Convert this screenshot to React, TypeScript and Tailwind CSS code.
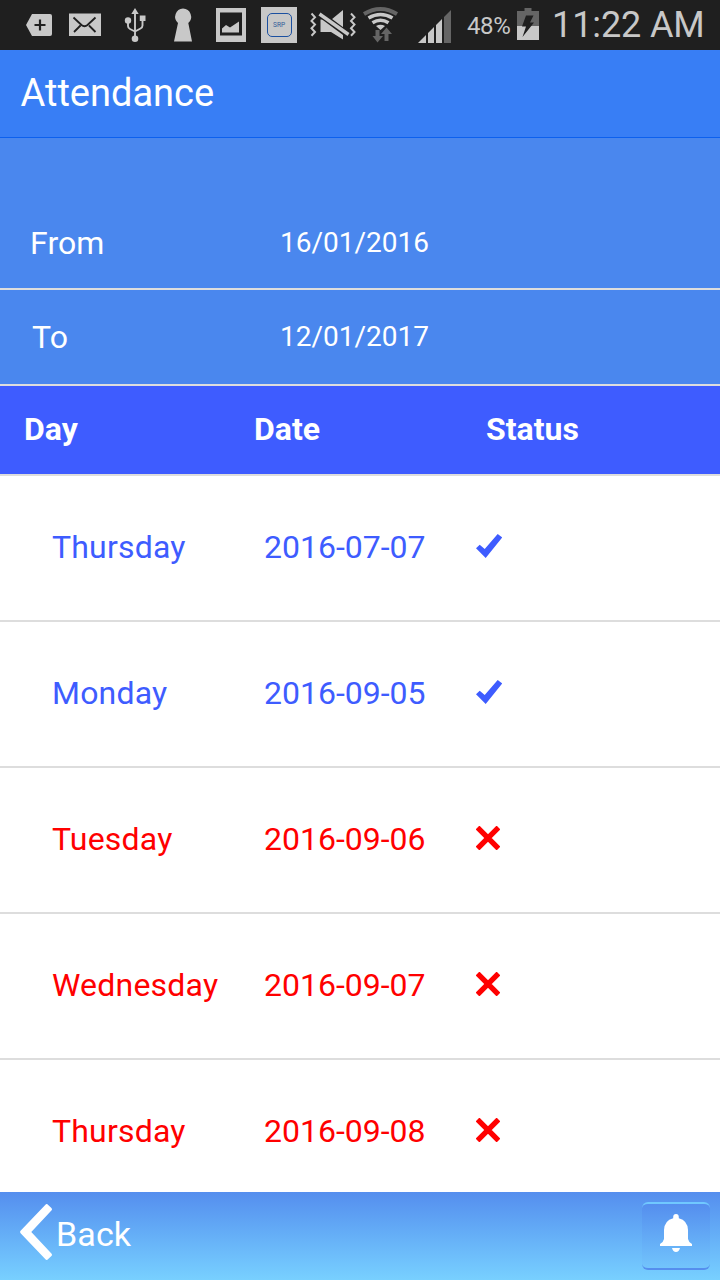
type Entry = { day: string; date: string; present: boolean };

const entries: Entry[] = [
  { day: "Thursday", date: "2016-07-07", present: true },
  { day: "Monday", date: "2016-09-05", present: true },
  { day: "Tuesday", date: "2016-09-06", present: false },
  { day: "Wednesday", date: "2016-09-07", present: false },
  { day: "Thursday", date: "2016-09-08", present: false },
];

function StatusBar() {
  return (
    <div className="flex h-[50px] shrink-0 items-center bg-[#1f1f1f] pl-[26px] text-[#c8c8c8]">
      {/* Tag with plus */}
      <svg className="h-[50px] w-[26px] shrink-0" viewBox="26 0 26 50" fill="#c8c8c8">
        <path d="M32 14h18q2 0 2 2v18q0 2-2 2H32l-6-11z" />
        <path d="M34.5 25h11M40 19.5v11" stroke="#1f1f1f" strokeWidth="2.2" />
      </svg>

      {/* Mail */}
      <svg className="ml-[17px] h-[50px] w-8 shrink-0" viewBox="69 0 32 50">
        <path d="M69 13.5h32V36H69z" fill="#c8c8c8" />
        <path d="M73.5 17.5l8 7.5q3 2.5 6 0l8-7.5M74 32l6.5-6.5M95.5 32L89 25.5" fill="none" stroke="#1f1f1f" strokeWidth="1.8" />
      </svg>

      {/* USB */}
      <svg className="ml-[23px] h-[50px] w-[22px] shrink-0" viewBox="124 0 22 50" fill="#c8c8c8">
        <path d="M135 8l3.7 6h-7.4zM139.8 15.5h5.7v5.5h-5.7z" />
        <circle cx="128" cy="20.5" r="3.2" />
        <circle cx="135" cy="38.8" r="3.3" />
        <path d="M135 12v25M128 21v5q0 2 2 3l5 2.5 5.5-3q2-1 2-3V20" fill="none" stroke="#c8c8c8" strokeWidth="1.9" />
      </svg>

      {/* Keyhole */}
      <svg className="ml-[27px] h-[50px] w-5 shrink-0" viewBox="173 0 20 50" fill="#c8c8c8">
        <path d="M183 8.5a8.3 8.3 0 0 1 5.3 14.5L192 41.5h-18L178 23A8.3 8.3 0 0 1 183 8.5z" />
      </svg>

      {/* Picture */}
      <svg className="ml-[23px] h-[50px] w-[30px] shrink-0" viewBox="216 0 30 50">
        <path d="M216 8h30v34h-30z" fill="#c8c8c8" />
        <path d="M220 12.5h22v23h-22z" fill="#1f1f1f" />
        <path d="M222 32.5v-4l4-3.5 4 2.5 9-6v11z" fill="#c8c8c8" />
      </svg>

      {/* SRP app */}
      <div className="ml-[15px] flex h-9 w-9 shrink-0 items-center justify-center bg-[#c8c8c8]">
        <div className="flex h-6 w-[25px] items-center justify-center rounded-[5px] border border-[#1c50a0] text-[6.5px] font-normal leading-none text-[#305c98]">
          SRP
        </div>
      </div>

      {/* Vibrate, muted */}
      <svg className="ml-3 h-[50px] w-[48px] shrink-0" viewBox="309 0 48 50">
        <path d="M320.5 19.5h11L343 10v29.5L331 32h-10.5z" fill="#c8c8c8" />
        <path d="M318 12.5l31 23" stroke="#1f1f1f" strokeWidth="6.5" />
        <path d="M319.5 14l29 20.5" stroke="#c8c8c8" strokeWidth="3.4" />
        <path
          d="M311.5 13.5l3.5 3.7-3.5 3.7 3.5 3.7-3.5 3.7 3.5 3.7-3.5 3.7M351 13.5l3.5 3.7-3.5 3.7 3.5 3.7-3.5 3.7 3.5 3.7-3.5 3.7"
          fill="none"
          stroke="#c8c8c8"
          strokeWidth="2"
        />
      </svg>

      {/* Wifi */}
      <svg className="ml-[5px] h-[50px] w-9 shrink-0" viewBox="362 0 36 50" fill="none" strokeWidth="3.6">
        <path d="M364 14q16.5-10 33 0" stroke="#656565" strokeWidth="4" />
        <path d="M368.5 18q12-7 24 0M372.5 22.8q8-5 16 0" stroke="#c8c8c8" />
        <path d="M376 26q4.500-2.500 9 0L380.500 30z" fill="#c8c8c8" />
        <path d="M375.5 30h4v6h3.5l-5.500 6.500-5-6.500h3zM386.500 27.500l5.500 6.500h-3.500v7h-4v-7H381z" fill="#656565" />
      </svg>

      {/* Signal */}
      <svg className="ml-5 h-[50px] w-[34px] shrink-0" viewBox="418 0 34 50" fill="#c8c8c8">
        <path d="M418 43l8-8v8zM428 33l6-6v16h-6zM436 25l6-6v24h-6z" />
        <path d="M444 17l7-7v33h-7z" fill="#656565" />
      </svg>

      <span className="ml-[15px] w-[47px] pt-[2px] text-2xl leading-7 tracking-[-0.4px]">48%</span>

      {/* Battery */}
      <svg className="ml-[3px] h-[50px] w-[22px] shrink-0" viewBox="517 0 22 50">
        <path d="M517 11h7.5V8h7v3h7.5v15h-22z" fill="#656565" />
        <path d="M517 26h22v14h-22z" fill="#c8c8c8" />
        <path d="M526 15.5h7.5L530 22.5h4L522.5 37l3.5-10.5h-4z" fill="#1f1f1f" />
      </svg>

      <span className="ml-[13px] whitespace-nowrap text-4xl leading-[42px] tracking-[-0.1px]">11:22 AM</span>
    </div>
  );
}

function CheckMark() {
  return (
    <svg className="mb-[2px] h-6 w-[26px]" viewBox="0 0 26 24" fill="#3e5cff">
      <path d="M0 14.3l3.7-3.6 5 4.3L21.700 0l4.500 3.400L9.700 24z" />
    </svg>
  );
}

function CrossMark() {
  return (
    <svg className="mb-[2px] h-6 w-6" viewBox="0 0 24 24" fill="none" stroke="#ff0000" strokeWidth="5.4">
      <path d="M1.5 1.5l21 21M22.5 1.5l-21 21" />
    </svg>
  );
}

function FilterRow({ label, value, className }: { label: string; value: string; className: string }) {
  return (
    <div className={`grid shrink-0 items-center border-b-2 border-[#dddddd] bg-[#4a87ee] text-white ${className}`}>
      <span className="text-[32px] leading-10 tracking-[0.1px]">{label}</span>
      <span className="text-[28px] leading-10">{value}</span>
    </div>
  );
}

export default function App() {
  return (
    <div className="flex h-[1280px] w-[720px] flex-col overflow-hidden bg-white font-['Roboto',sans-serif]">
      <StatusBar />

      <header className="flex h-[88px] shrink-0 items-center border-b border-[#0c60ee] bg-[#387ef5] pl-[20.5px] text-[38px] text-white">
        Attendance
      </header>

      <main className="flex min-h-0 flex-1 flex-col overflow-hidden">
        <FilterRow label="From" value="16/01/2016" className="h-[152px] grid-cols-[250px_1fr] pl-[30px] pt-[60px]" />
        <FilterRow label="To" value="12/01/2017" className="h-24 grid-cols-[248px_1fr] pl-8" />

        <div className="flex h-[90px] shrink-0 items-center border-b-2 border-[#dddddd] bg-[#3e5cff] pb-[2px] pl-6 text-[32px] font-bold text-white">
          <span className="w-[230px]">Day</span>
          <span className="w-[232px]">Date</span>
          <span>Status</span>
        </div>

        {entries.map((entry) => (
          <div
            key={entry.date}
            className={`flex h-[146px] shrink-0 items-center border-b-2 border-[#dddddd] pb-[2px] pl-[52px] text-[32px] ${
              entry.present ? "text-[#3e5cff]" : "text-[#ff0000]"
            }`}
          >
            <span className="w-[212px] tracking-[0.2px]">{entry.day}</span>
            <span className="w-[212px]">{entry.date}</span>
            {entry.present ? <CheckMark /> : <CrossMark />}
          </div>
        ))}
      </main>

      <footer className="flex h-[88px] shrink-0 items-center bg-linear-to-b from-[#558eee] to-[#78d0ff] pl-5 pr-[10px] text-white">
        <svg className="mb-2 h-14 w-8" viewBox="0 0 32 56" fill="currentColor">
          <path d="M25.2 1q1.500-2 3 0l3.200 3q1.200 1.300 0 2.600L11.300 28l20.100 21.400q1.200 1.300 0 2.600l-3.200 3q-1.500 2-3 0L.600 29.200q-1-1.200 0-2.400z" />
        </svg>
        <span className="ml-1 flex-1 pb-1 text-[34px] leading-10 tracking-[0.1px]">Back</span>
        <button className="flex h-[68px] w-[68px] items-center justify-center rounded-md border-y-2 border-t-[#70c8ff] border-b-[#558eee] bg-linear-to-b from-[#558eee] to-[#72c4fc]">
          <svg className="mb-[6px] h-[38px] w-8" viewBox="0 0 32 38" fill="currentColor">
            <path d="M13.200 3a2.800 3 0 0 1 5.600 0v1.200Q27.700 6.500 28 16v9q.3 2.500 4 5v2H0v-2q3.700-2.500 4-5v-9Q4.300 6.500 13.200 4.200zM12 34h8q-1 4-4 4t-4-4z" />
          </svg>
        </button>
      </footer>
    </div>
  );
}
